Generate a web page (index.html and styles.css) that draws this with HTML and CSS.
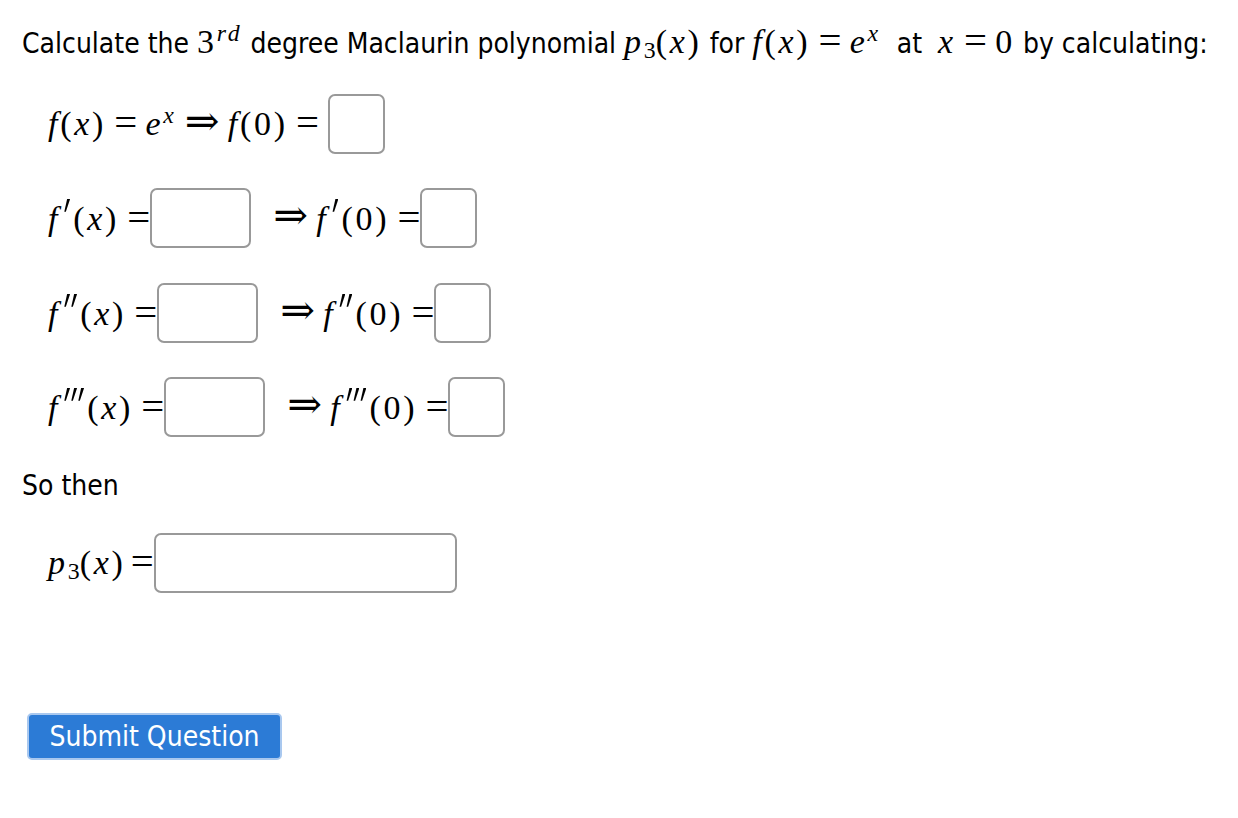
FILE: index.html
```html
<!DOCTYPE html>
<html>
<head>
<meta charset="utf-8">
<link rel="stylesheet" href="styles.css">
</head>
<body>
<div class="page">
  <p class="intro">Calculate the <span class="m">3<sup><i>rd</i></sup></span> degree Maclaurin polynomial <span class="m"><i>p</i><sub>3</sub>(<i>x</i>)</span> for <span class="m"><i>f</i>(<i>x</i>)<span class="rel">=</span><i>e</i><sup><i>x</i></sup></span>&nbsp; at &nbsp;<span class="m"><i>x</i><span class="rel">=</span>0</span> by calculating:</p>

  <div class="row row1">
    <span class="m"><i>f</i>(<i>x</i>)<span class="rel">=</span><i>e</i><sup><i>x</i></sup><span class="rel imp">⇒</span><i>f</i>(0)<span class="eq">=</span></span><span class="box small spaced"></span>
  </div>

  <div class="row row2">
    <span class="m"><i>f</i><span class="pr"><span class="tick"></span></span>(<i>x</i>)<span class="eq">=</span></span><span class="box wide"></span>
    <span class="m arrow"><span class="imp lead">⇒</span><i>f</i><span class="pr"><span class="tick"></span></span>(0)<span class="eq">=</span></span><span class="box small"></span>
  </div>

  <div class="row row3">
    <span class="m"><i>f</i><span class="pr"><span class="tick"></span><span class="tick"></span></span>(<i>x</i>)<span class="eq">=</span></span><span class="box wide"></span>
    <span class="m arrow"><span class="imp lead">⇒</span><i>f</i><span class="pr"><span class="tick"></span><span class="tick"></span></span>(0)<span class="eq">=</span></span><span class="box small"></span>
  </div>

  <div class="row row4">
    <span class="m"><i>f</i><span class="pr"><span class="tick"></span><span class="tick"></span><span class="tick"></span></span>(<i>x</i>)<span class="eq">=</span></span><span class="box wide"></span>
    <span class="m arrow"><span class="imp lead">⇒</span><i>f</i><span class="pr"><span class="tick"></span><span class="tick"></span><span class="tick"></span></span>(0)<span class="eq">=</span></span><span class="box small"></span>
  </div>

  <p class="sothen">So then</p>

  <div class="row row5">
    <span class="m"><i>p</i><sub>3</sub>(<i>x</i>)<span class="eq">=</span></span><span class="box long"></span>
  </div>

  <button class="submit">Submit Question</button>
</div>
</body>
</html>
```

FILE: styles.css
```css
html, body {
  margin: 0;
  padding: 0;
  background: #ffffff;
}

.page {
  padding: 14px 22px 0 22px;
  font-family: "DejaVu Sans Condensed", "DejaVu Sans", sans-serif;
  font-size: 28px;
  color: #000;
}

.intro {
  margin: 0;
  line-height: 56px;
}

.m {
  font-family: "Liberation Serif", "DejaVu Serif", serif;
  font-size: 34px;
  font-style: normal;
  letter-spacing: 0.08em;
  white-space: nowrap;
}

.m i {
  font-style: italic;
}

.m sup {
  font-size: 0.7em;
  line-height: 0;
  vertical-align: 0.5em;
}

.m sub {
  font-size: 0.7em;
  line-height: 0;
  letter-spacing: 0;
  margin-right: 0;
  vertical-align: -0.2em;
}

.rel,
.eq {
  font-size: 1.2em;
  line-height: 0;
  letter-spacing: 0;
  vertical-align: -0.03em;
}

.rel {
  margin: 0 0.2em;
}

.eq {
  margin-left: 0.2em;
}

.row5 .eq {
  margin-left: 0.13em;
}

.imp {
  font-size: 1.22em;
  line-height: 0;
  letter-spacing: 0;
  vertical-align: 0;
}

.imp.lead {
  margin-right: 0.2em;
}

.pr {
  display: inline-flex;
  gap: 1px;
  margin: 0 3px 0 4px;
  vertical-align: 0.52em;
}

.tick {
  display: inline-block;
  width: 6px;
  height: 13px;
  background: #000;
  clip-path: polygon(50% 0, 100% 0, 28% 100%, 2% 100%);
}

.row {
  display: flex;
  align-items: center;
  padding-left: 26px;
}

.row1 { margin-top: 22px; }
.row2 { margin-top: 34px; }
.row3 { margin-top: 35px; }
.row4 { margin-top: 34px; }
.row5 { margin-top: 30px; }

.arrow {
  margin-left: 22px;
}

.box {
  display: inline-block;
  box-sizing: border-box;
  height: 60px;
  border: 2px solid #999999;
  border-radius: 7px;
  background: #fff;
}

.box.spaced { margin-left: 9px; }
.box.small { width: 57px; }
.box.wide { width: 101px; }
.box.long { width: 303px; }

.sothen {
  margin: 32px 0 0 0;
  line-height: 34px;
}

.submit {
  margin: 120px 0 0 5px;
  width: 255px;
  height: 47px;
  box-sizing: border-box;
  background: #2c7bd6;
  color: #ffffff;
  border: 2px solid #a9c8ef;
  border-radius: 5px;
  font-family: "DejaVu Sans Condensed", "DejaVu Sans", sans-serif;
  font-size: 28px;
  padding: 0;
}
```
